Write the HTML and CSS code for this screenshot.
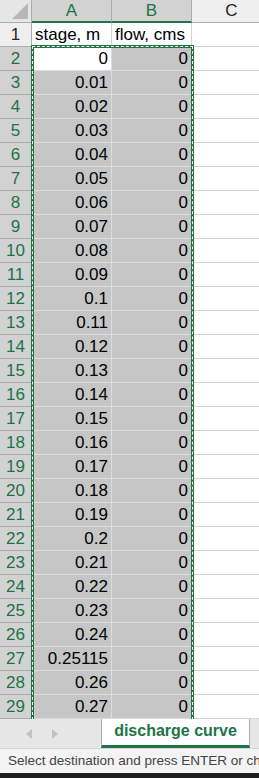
FILE: index.html
```html
<!DOCTYPE html>
<html lang="en">
<head>
  <meta charset="UTF-8">
  <title>discharge curve</title>
  <link rel="stylesheet" href="styles.css">
</head>
<body>
  <div class="sheet">
    <div class="row head">
      <div class="corner"><span class="tri"></span></div>
      <div class="ch sel">A</div>
      <div class="ch sel">B</div>
      <div class="ch">C</div>
    </div>
    <div class="row">
      <div class="rh">1</div>
      <div class="c">stage, m</div>
      <div class="c">flow, cms</div>
      <div class="c"></div>
    </div>
    <div class="row sel"><div class="rh">2</div><div class="c num act">0</div><div class="c num">0</div><div class="c"></div></div>
    <div class="row sel"><div class="rh">3</div><div class="c num">0.01</div><div class="c num">0</div><div class="c"></div></div>
    <div class="row sel"><div class="rh">4</div><div class="c num">0.02</div><div class="c num">0</div><div class="c"></div></div>
    <div class="row sel"><div class="rh">5</div><div class="c num">0.03</div><div class="c num">0</div><div class="c"></div></div>
    <div class="row sel"><div class="rh">6</div><div class="c num">0.04</div><div class="c num">0</div><div class="c"></div></div>
    <div class="row sel"><div class="rh">7</div><div class="c num">0.05</div><div class="c num">0</div><div class="c"></div></div>
    <div class="row sel"><div class="rh">8</div><div class="c num">0.06</div><div class="c num">0</div><div class="c"></div></div>
    <div class="row sel"><div class="rh">9</div><div class="c num">0.07</div><div class="c num">0</div><div class="c"></div></div>
    <div class="row sel"><div class="rh">10</div><div class="c num">0.08</div><div class="c num">0</div><div class="c"></div></div>
    <div class="row sel"><div class="rh">11</div><div class="c num">0.09</div><div class="c num">0</div><div class="c"></div></div>
    <div class="row sel"><div class="rh">12</div><div class="c num">0.1</div><div class="c num">0</div><div class="c"></div></div>
    <div class="row sel"><div class="rh">13</div><div class="c num">0.11</div><div class="c num">0</div><div class="c"></div></div>
    <div class="row sel"><div class="rh">14</div><div class="c num">0.12</div><div class="c num">0</div><div class="c"></div></div>
    <div class="row sel"><div class="rh">15</div><div class="c num">0.13</div><div class="c num">0</div><div class="c"></div></div>
    <div class="row sel"><div class="rh">16</div><div class="c num">0.14</div><div class="c num">0</div><div class="c"></div></div>
    <div class="row sel"><div class="rh">17</div><div class="c num">0.15</div><div class="c num">0</div><div class="c"></div></div>
    <div class="row sel"><div class="rh">18</div><div class="c num">0.16</div><div class="c num">0</div><div class="c"></div></div>
    <div class="row sel"><div class="rh">19</div><div class="c num">0.17</div><div class="c num">0</div><div class="c"></div></div>
    <div class="row sel"><div class="rh">20</div><div class="c num">0.18</div><div class="c num">0</div><div class="c"></div></div>
    <div class="row sel"><div class="rh">21</div><div class="c num">0.19</div><div class="c num">0</div><div class="c"></div></div>
    <div class="row sel"><div class="rh">22</div><div class="c num">0.2</div><div class="c num">0</div><div class="c"></div></div>
    <div class="row sel"><div class="rh">23</div><div class="c num">0.21</div><div class="c num">0</div><div class="c"></div></div>
    <div class="row sel"><div class="rh">24</div><div class="c num">0.22</div><div class="c num">0</div><div class="c"></div></div>
    <div class="row sel"><div class="rh">25</div><div class="c num">0.23</div><div class="c num">0</div><div class="c"></div></div>
    <div class="row sel"><div class="rh">26</div><div class="c num">0.24</div><div class="c num">0</div><div class="c"></div></div>
    <div class="row sel"><div class="rh">27</div><div class="c num">0.25115</div><div class="c num">0</div><div class="c"></div></div>
    <div class="row sel"><div class="rh">28</div><div class="c num">0.26</div><div class="c num">0</div><div class="c"></div></div>
    <div class="row sel"><div class="rh">29</div><div class="c num">0.27</div><div class="c num">0</div><div class="c"></div></div>

    <div class="ants"></div>
  </div>

  <div class="tabs">
    <div class="nav">
      <span class="arrow left"></span>
      <span class="arrow right"></span>
    </div>
    <div class="tab">discharge curve</div>
    <div class="tab-rest"></div>
  </div>

  <div class="status">Select destination and press ENTER or choose Paste</div>
  <div class="taskbar"></div>
</body>
</html>
```

FILE: styles.css
```css
body { margin: 0; background: #fff; font-family: "Liberation Sans", Arial, sans-serif; overflow: hidden; }

.sheet { position: relative; height: 719px; overflow: hidden; width: 259px; }
.row { display: flex; height: 24px; width: 300px; }
.row.head { height: 23px; }

.corner, .rh { flex: 0 0 32px; box-sizing: border-box; border-right: 1px solid #ababab; border-bottom: 1px solid #ababab; background: #efefef; }
.corner { position: relative; background: #e6e6e6; }
.tri { position: absolute; right: 3px; bottom: 3px; width: 0; height: 0; border-left: 16px solid transparent; border-bottom: 16px solid #b7b7b7; }

.ch { flex: 0 0 80px; box-sizing: border-box; border-right: 1px solid #ababab; border-bottom: 1px solid #ababab; background: #efefef; color: #262626; font-size: 17px; display: flex; align-items: center; justify-content: center; }
.ch.sel { background: #d2d2d2; color: #217346; border-bottom: 2px solid #217346; }

.rh { display: flex; align-items: center; justify-content: center; font-size: 17px; color: #262626; }
.row.sel .rh { background: #d2d2d2; color: #217346; }

.c { flex: 0 0 80px; box-sizing: border-box; border-right: 1px solid #d4d4d4; border-bottom: 1px solid #d4d4d4; font-size: 17px; color: #000; display: flex; align-items: flex-end; padding: 0 3px 1px 3px; white-space: nowrap; overflow: hidden; }
.row.sel .c:nth-child(2), .row.sel .c:nth-child(3) { background: #c6c6c6; border-color: #dcdcdc; }
.row.sel .c.act { background: #fff; }
.num { justify-content: flex-end; }

.ants { position: absolute; left: 31px; top: 45px; width: 157px; height: 720px; border: 3px solid #217346; }
.ants::after { content: ""; position: absolute; top: -2px; left: -2px; right: -2px; bottom: -2px; border: 1px dashed #fff; }

.tabs { display: flex; height: 29px; background: #e6e6e6; }
.nav { flex: 0 0 101px; display: flex; align-items: center; padding-left: 26px; gap: 20px; box-sizing: border-box; }
.arrow { width: 0; height: 0; border-top: 5px solid transparent; border-bottom: 5px solid transparent; }
.arrow.left { border-right: 6px solid #c2c2c2; }
.arrow.right { border-left: 6px solid #c2c2c2; }
.tab { flex: 0 0 149px; box-sizing: border-box; background: #fff; border-left: 1px solid #ababab; border-right: 1px solid #ababab; border-bottom: 3px solid #217346; color: #217346; font-weight: bold; font-size: 16px; display: flex; align-items: center; justify-content: center; padding-bottom: 2px; }
.tab-rest { flex: 1; }

.status { height: 25px; box-sizing: border-box; background: #f3f3f3; border-top: 1px solid #d6d6d6; color: #444; font-size: 13.5px; padding: 4px 0 0 8px; white-space: nowrap; overflow: hidden; }
.taskbar { height: 5px; background: #1f1f1f; }
```
